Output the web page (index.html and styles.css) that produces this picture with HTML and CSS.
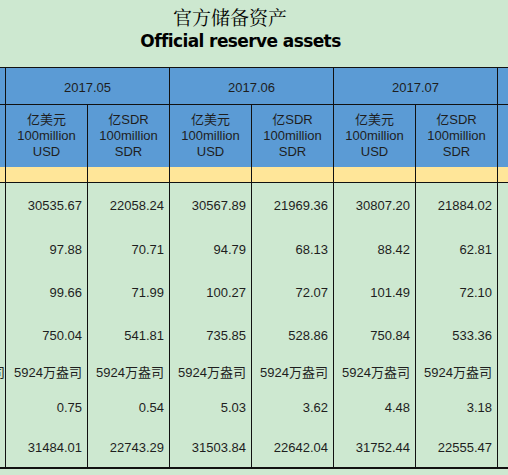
FILE: index.html
```html
<!DOCTYPE html>
<html>
<head>
  <meta charset="utf-8">
  <title>官方储备资产</title>
  <link rel="stylesheet" href="styles.css">
</head>
<body>
  <div class="sheet-title">
    <div class="title-cn">官方储备资产</div>
    <div class="title-en">Official reserve assets</div>
  </div>

  <table class="reserve-table">
    <colgroup>
      <col class="col-edge">
      <col class="col-val"><col class="col-val">
      <col class="col-val"><col class="col-val">
      <col class="col-val"><col class="col-val">
      <col class="col-tail">
    </colgroup>
    <tr class="row-year">
      <td class="edge"></td>
      <td colspan="2">2017.05</td>
      <td colspan="2">2017.06</td>
      <td colspan="2">2017.07</td>
      <td class="tail"></td>
    </tr>
    <tr class="row-unit">
      <td class="edge"></td>
      <td>亿美元<br>100million<br>USD</td>
      <td>亿SDR<br>100million<br>SDR</td>
      <td>亿美元<br>100million<br>USD</td>
      <td>亿SDR<br>100million<br>SDR</td>
      <td>亿美元<br>100million<br>USD</td>
      <td>亿SDR<br>100million<br>SDR</td>
      <td class="tail"></td>
    </tr>
    <tr class="row-band">
      <td class="edge"></td>
      <td></td><td></td><td></td><td></td><td></td><td></td>
      <td class="tail"></td>
    </tr>
    <tr class="row-data h44">
      <td class="edge"></td>
      <td>30535.67</td><td>22058.24</td><td>30567.89</td><td>21969.36</td><td>30807.20</td><td>21884.02</td>
      <td class="tail"></td>
    </tr>
    <tr class="row-data h44">
      <td class="edge"></td>
      <td>97.88</td><td>70.71</td><td>94.79</td><td>68.13</td><td>88.42</td><td>62.81</td>
      <td class="tail"></td>
    </tr>
    <tr class="row-data h42">
      <td class="edge"></td>
      <td>99.66</td><td>71.99</td><td>100.27</td><td>72.07</td><td>101.49</td><td>72.10</td>
      <td class="tail"></td>
    </tr>
    <tr class="row-data h44">
      <td class="edge"></td>
      <td>750.04</td><td>541.81</td><td>735.85</td><td>528.86</td><td>750.84</td><td>533.36</td>
      <td class="tail"></td>
    </tr>
    <tr class="row-data h28">
      <td class="edge"><div class="clip">盎司</div></td>
      <td>5924万盎司</td><td>5924万盎司</td><td>5924万盎司</td><td>5924万盎司</td><td>5924万盎司</td><td>5924万盎司</td>
      <td class="tail"></td>
    </tr>
    <tr class="row-data h44">
      <td class="edge"></td>
      <td>0.75</td><td>0.54</td><td>5.03</td><td>3.62</td><td>4.48</td><td>3.18</td>
      <td class="tail"></td>
    </tr>
    <tr class="row-data row-total">
      <td class="edge"></td>
      <td>31484.01</td><td>22743.29</td><td>31503.84</td><td>22642.04</td><td>31752.44</td><td>22555.47</td>
      <td class="tail"></td>
    </tr>
  </table>
</body>
</html>
```

FILE: styles.css
```css
body {
  margin: 0;
  background: #cde8d0;
  font-family: "Liberation Sans", Arial, "Noto Sans CJK SC", sans-serif;
  font-size: 13px;
  color: #1e1e1e;
}

.sheet-title {
  height: 67px;
  display: flex;
  flex-direction: column;
  align-items: center;
  padding-right: 27px;
  box-sizing: border-box;
}

.title-cn {
  font-family: "Noto Serif CJK SC", "Noto Sans CJK SC", serif;
  font-size: 19px;
  line-height: 24px;
  padding-top: 5px;
  padding-right: 21px;
  color: #000;
}

.title-en {
  font-family: "DejaVu Sans", Verdana, sans-serif;
  font-weight: bold;
  font-size: 17px;
  letter-spacing: -0.6px;
  line-height: 24px;
  color: #000;
}

.reserve-table {
  width: 508px;
  table-layout: fixed;
  border-collapse: separate;
  border-spacing: 0;
}

.col-edge { width: 6px; }
.col-val { width: 82px; }
.col-tail { width: 10px; }

.reserve-table td {
  padding: 0;
  border-right: 1px solid #111;
  overflow: hidden;
  white-space: nowrap;
}

.reserve-table td.tail {
  border-right: none;
}

/* header rows */
.row-year td,
.row-unit td {
  background: #5b9bd5;
  text-align: center;
}

.row-year { height: 38px; }

.row-year td {
  border-top: 1px solid #111;
  border-bottom: 1px solid #111;
  padding-top: 3px;
}

.row-unit { height: 62px; }

.row-unit td {
  line-height: 16px;
  font-family: "Liberation Sans", Arial, "Noto Sans CJK SC", sans-serif;
}

.row-band { height: 16px; }

.row-band td {
  background: #ffe699;
  border-bottom: 1px solid #111;
}

/* figures */
.row-data td {
  text-align: right;
  padding-right: 5px;
}

.row-data td.edge,
.row-data td.tail {
  padding-right: 0;
}

.h44 { height: 44px; }
.h42 { height: 42px; }
.h28 { height: 28px; }

.row-total { height: 40px; }

.row-total td {
  border-bottom: 2px solid #111;
  vertical-align: top;
  padding-top: 11px;
}

.clip {
  display: flex;
  justify-content: flex-end;
  width: 5px;
}
```
